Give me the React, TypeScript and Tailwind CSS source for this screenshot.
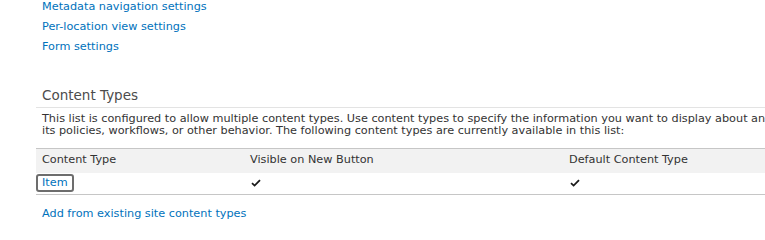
import React from "react";

const font = { fontFamily: '"DejaVu Sans", Verdana, sans-serif' };

function Check() {
  return (
    <svg width="10" height="8" viewBox="0 0 10 8" className="block">
      <path d="M1 4.2 L3.6 6.6 L9 1.2" fill="none" stroke="#1a1a1a" strokeWidth="1.8" />
    </svg>
  );
}

export default function App() {
  const links = ["Metadata navigation settings", "Per-location view settings", "Form settings"];

  return (
    <div className="w-[765px] h-[222px] overflow-hidden bg-white text-[11.25px] text-[#333333]" style={font}>
      <div className="w-[1000px] pl-[36px] -mt-[3px]">
        {/* Settings links */}
        <div className="flex flex-col pl-[6px]">
          {links.map((l) => (
            <a key={l} className="h-[20px] leading-[20px] text-[#0072bc]">
              {l}
            </a>
          ))}
        </div>

        {/* Content Types section */}
        <div className="mt-[30px] pl-[1px] border-b border-[#e3e3e3]">
          <h3 className="pl-[5px] pb-[3px] text-[13.5px] leading-[17px] text-[#4c4c4c] font-normal">Content Types</h3>
        </div>
        <p className="pl-[6px] pt-[5px] leading-[12px] text-[#333333]">
          This list is configured to allow multiple content types. Use content types to specify the information you want to display about an item,
          <br />
          its policies, workflows, or other behavior. The following content types are currently available in this list:
        </p>

        <table className="mt-[11px] w-[900px] border-collapse">
          <thead>
            <tr className="bg-[#f2f2f2] border-t border-[#c6c6c6] h-[24px]">
              <th className="w-[214px] pl-[6px] text-left font-normal text-[#333333]">Content Type</th>
              <th className="w-[319px] text-left font-normal text-[#333333]">Visible on New Button</th>
              <th className="text-left font-normal text-[#333333]">Default Content Type</th>
            </tr>
          </thead>
          <tbody>
            <tr className="border-b border-[#c6c6c6] h-[22px]">
              <td className="align-middle">
                <span className="inline-flex items-center h-[18px] rounded-[3px] border-2 border-[#6d6d6d] px-[4px] text-[#0072bc]">Item</span>
              </td>
              <td className="align-middle">
                <div className="pl-[1px]">
                  <Check />
                </div>
              </td>
              <td className="align-middle">
                <div className="pl-[1px]">
                  <Check />
                </div>
              </td>
            </tr>
          </tbody>
        </table>

        <div className="pl-[6px] pt-[11px]">
          <a className="text-[#0072bc] leading-[14px]">Add from existing site content types</a>
        </div>
      </div>
    </div>
  );
}
